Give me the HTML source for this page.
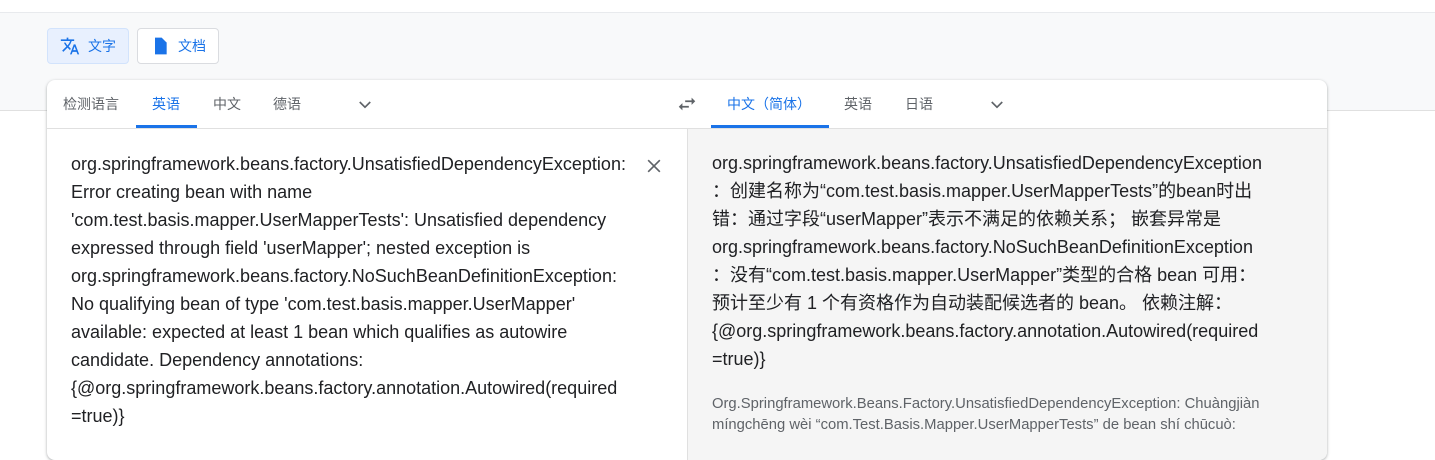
<!DOCTYPE html>
<html><head><meta charset="utf-8"><style>
*{margin:0;padding:0;box-sizing:border-box}
body{width:1435px;height:442px;overflow:hidden;background:#fff;font-family:"Liberation Sans","Noto Sans CJK SC",sans-serif;position:relative}
.band{position:absolute;left:0;top:12px;width:1435px;height:99px;background:#f8f9fa;border-top:1px solid #e8eaed;border-bottom:1px solid #e0e0e0}
.btn{position:absolute;top:28px;height:36px;border-radius:4px;border:1px solid #dadce0;background:#fff;font-size:14px;color:#1a73e8;display:flex;align-items:center;font-family:"Noto Sans CJK SC",sans-serif}
.card{position:absolute;left:47px;top:80px;width:1280px;height:380px;background:#fff;border-radius:8px;box-shadow:0 1px 3px rgba(60,64,67,.3),0 1px 2px rgba(60,64,67,.15);overflow:hidden}
.hdr{position:absolute;left:0;top:0;width:1280px;height:49px;border-bottom:1px solid #e0e0e0}
.tab{position:absolute;top:0;height:48px;line-height:48px;font-size:14px;color:#5f6368;font-family:"Noto Sans CJK SC",sans-serif}
.act{color:#1a73e8}
.ul{position:absolute;top:45px;height:3px;background:#1a73e8}
.right{position:absolute;left:640px;top:49px;width:640px;height:340px;background:#f5f5f5;border-left:1px solid #e0e0e0}
.txt{position:absolute;font-size:18px;line-height:28px;color:#202124;white-space:nowrap}
.gray{position:absolute;font-size:14.8px;line-height:21px;color:#5f6368;white-space:nowrap}
</style></head><body>
<div class="band"></div>
<div class="btn" style="left:47px;width:82px;background:#e8f0fe;border-color:#d2e3fc">
<svg style="margin-left:12px" width="20" height="20" viewBox="0 0 24 24"><path fill="#1a73e8" d="M12.87 15.07l-2.54-2.51.03-.03A17.5 17.5 0 0 0 14.07 6H17V4h-7V2H8v2H1v2h11.17C11.5 7.920 10.44 9.75 9 11.35 8.07 10.32 7.3 9.19 6.69 8h-2c.73 1.63 1.73 3.17 2.98 4.56l-5.09 5.02L4 19l5-5 3.11 3.11.76-2.04zM18.5 10h-2L12 22h2l1.12-3h4.75L21 22h2l-4.5-12zm-2.62 7l1.62-4.330L19.12 17h-3.24z"/></svg>
<span style="margin-left:8px">文字</span></div>
<div class="btn" style="left:137px;width:82px">
<svg style="margin-left:12px" width="20" height="20" viewBox="0 0 24 24"><path fill="#1a73e8" d="M6 2h8l6 6v14H6z"/></svg>
<span style="margin-left:8px">文档</span></div>
<div class="card">
<div class="hdr">
<div class="tab" style="left:16px">检测语言</div>
<div class="tab act" style="left:105px">英语</div>
<div class="ul" style="left:89px;width:61px"></div>
<div class="tab" style="left:166px">中文</div>
<div class="tab" style="left:226px">德语</div>
<svg style="position:absolute;left:309px;top:16px" width="18" height="18" viewBox="0 0 24 24"><path d="M5 8l7 7 7-7" stroke="#5f6368" stroke-width="2.2" fill="none"/></svg>
<svg style="position:absolute;left:629px;top:13px" width="22" height="22" viewBox="0 0 24 24"><path fill="#5f6368" d="M6.99 11L3 15l3.99 4v-3H14v-2H6.99v-3zM21 9l-3.99-4v3H10v2h7.01v3L21 9z"/></svg>
<div class="tab act" style="left:680px">中文（简体）</div>
<div class="ul" style="left:664px;width:118px"></div>
<div class="tab" style="left:797px">英语</div>
<div class="tab" style="left:858px">日语</div>
<svg style="position:absolute;left:941px;top:16px" width="18" height="18" viewBox="0 0 24 24"><path d="M5 8l7 7 7-7" stroke="#5f6368" stroke-width="2.2" fill="none"/></svg>
</div>
<div class="txt" style="left:24px;top:70px">org.springframework.beans.factory.UnsatisfiedDependencyException:<br>Error creating bean with name<br>'com.test.basis.mapper.UserMapperTests': Unsatisfied dependency<br>expressed through field 'userMapper'; nested exception is<br>org.springframework.beans.factory.NoSuchBeanDefinitionException:<br>No qualifying bean of type 'com.test.basis.mapper.UserMapper'<br>available: expected at least 1 bean which qualifies as autowire<br>candidate. Dependency annotations:<br>{@org.springframework.beans.factory.annotation.Autowired(required<br>=true)}</div>
<svg style="position:absolute;left:597px;top:76px" width="20" height="20" viewBox="0 0 24 24"><path d="M5 5l14 14M19 5L5 19" stroke="#5f6368" stroke-width="2" fill="none"/></svg>
<div class="right">
<div class="txt" style="left:24px;top:20px">org.springframework.beans.factory.UnsatisfiedDependencyException<br>：创建名称为“com.test.basis.mapper.UserMapperTests”的bean时出<br>错：通过字段“userMapper”表示不满足的依赖关系； 嵌套异常是<br>org.springframework.beans.factory.NoSuchBeanDefinitionException<br>：没有“com.test.basis.mapper.UserMapper”类型的合格 bean 可用：<br>预计至少有 1 个有资格作为自动装配候选者的 bean。 依赖注解：<br>{@org.springframework.beans.factory.annotation.Autowired(required<br>=true)}</div>
<div class="gray" style="left:24px;top:265px">Org.Springframework.Beans.Factory.UnsatisfiedDependencyException: Chuàngjiàn<br>míngchēng wèi “com.Test.Basis.Mapper.UserMapperTests” de bean shí chūcuò:</div>
</div>
</div>
</body></html>
